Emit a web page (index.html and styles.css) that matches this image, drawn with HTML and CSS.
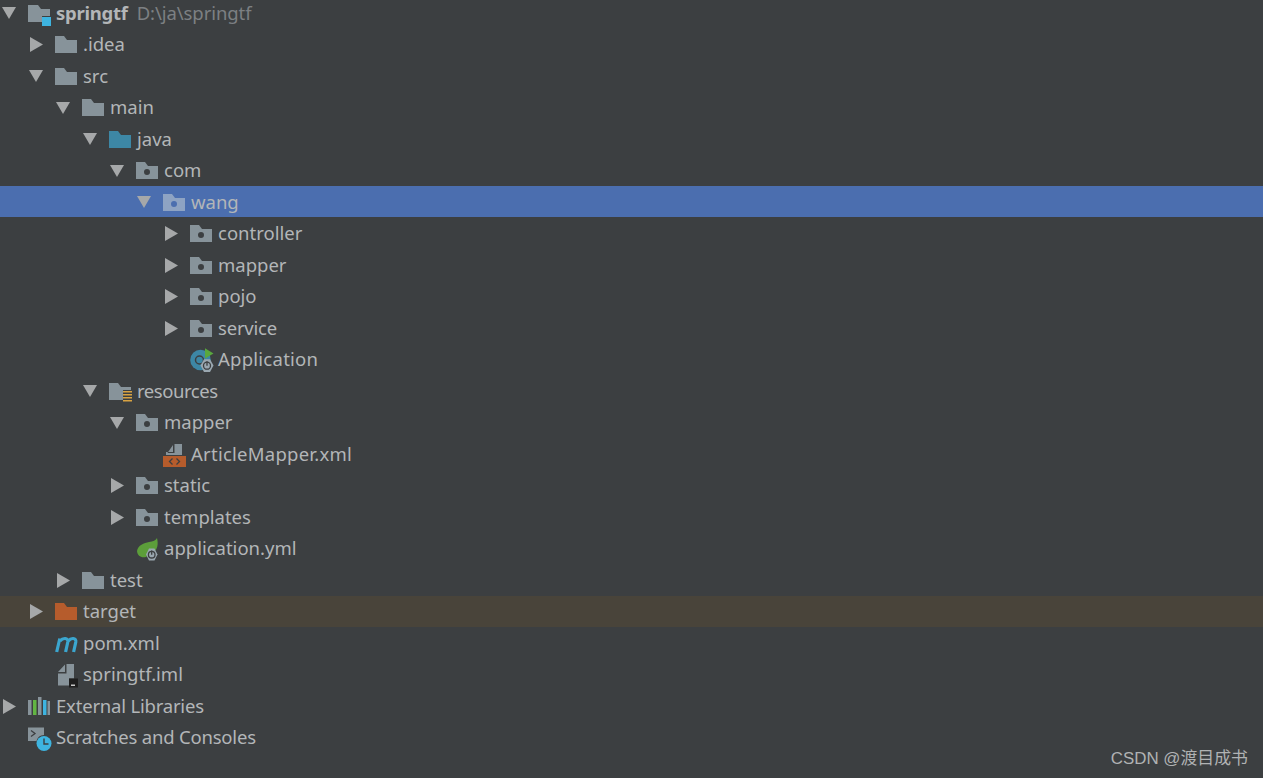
FILE: index.html
```html
<!DOCTYPE html>
<html lang="en">
<head>
<meta charset="utf-8">
<title>springtf</title>
<link rel="stylesheet" href="styles.css">
</head>
<body>
<svg class="defs" width="0" height="0" aria-hidden="true">
  <symbol id="down" viewBox="0 0 14 12"><path d="M0 0H14L7 12Z"/></symbol>
  <symbol id="right" viewBox="0 0 13 15"><path d="M0 0L13 7.5L0 15Z"/></symbol>
  <symbol id="folder" viewBox="0 0 22 17"><path d="M0 0H9L12 4H22V17H0Z"/></symbol>
  <symbol id="pkg" viewBox="0 0 22 17"><path fill-rule="evenodd" d="M0 0H9L12 4H22V17H0ZM11 7A3 3 0 1 0 11 13A3 3 0 1 0 11 7Z"/></symbol>
</svg>
<main class="tree">
  <div class="row l0"><svg class="arrow a-down"><use href="#down"/></svg><svg class="ico" viewBox="0 0 28 28"><path class="grey" d="M0 6H10L13 10H22V17H14V23H0Z"/><rect class="blue" x="14" y="18" width="9" height="9"/></svg><span class="label"><b>springtf</b><span class="path">D:\ja\springtf</span></span></div>
  <div class="row l1"><svg class="arrow a-right"><use href="#right"/></svg><svg class="folder grey"><use href="#folder"/></svg><span class="label">.idea</span></div>
  <div class="row l1"><svg class="arrow a-down"><use href="#down"/></svg><svg class="folder grey"><use href="#folder"/></svg><span class="label">src</span></div>
  <div class="row l2"><svg class="arrow a-down"><use href="#down"/></svg><svg class="folder grey"><use href="#folder"/></svg><span class="label">main</span></div>
  <div class="row l3"><svg class="arrow a-down"><use href="#down"/></svg><svg class="folder teal"><use href="#folder"/></svg><span class="label">java</span></div>
  <div class="row l4"><svg class="arrow a-down"><use href="#down"/></svg><svg class="folder grey"><use href="#pkg"/></svg><span class="label">com</span></div>
  <div class="row l5 selected"><svg class="arrow a-down"><use href="#down"/></svg><svg class="folder pale"><use href="#pkg"/></svg><span class="label">wang</span></div>
  <div class="row l6"><svg class="arrow a-right"><use href="#right"/></svg><svg class="folder grey"><use href="#pkg"/></svg><span class="label">controller</span></div>
  <div class="row l6"><svg class="arrow a-right"><use href="#right"/></svg><svg class="folder grey"><use href="#pkg"/></svg><span class="label">mapper</span></div>
  <div class="row l6"><svg class="arrow a-right"><use href="#right"/></svg><svg class="folder grey"><use href="#pkg"/></svg><span class="label">pojo</span></div>
  <div class="row l6"><svg class="arrow a-right"><use href="#right"/></svg><svg class="folder grey"><use href="#pkg"/></svg><span class="label tight">service</span></div>
  <div class="row l6"><span class="arrow"></span><svg class="ico" viewBox="0 0 28 28"><circle class="teal" cx="10.500" cy="14" r="10.300"/><circle cx="9.500" cy="14" r="4" fill="none" stroke="#3c3f41" stroke-width="1.500"/><path class="green" d="M15 2.300L23.500 7.500L15 12.500Z"/><path class="badge" d="M14 13.300H20L23.500 19.500L20 26H14L10.500 19.500Z"/><circle cx="17" cy="19.700" r="3.500" fill="none" stroke="#3c3f41" stroke-width="1.300"/><path d="M17 15.300V19.700" stroke="#3c3f41" stroke-width="1.300"/></svg><span class="label wide">Application</span></div>
  <div class="row l3"><svg class="arrow a-down"><use href="#down"/></svg><svg class="ico" viewBox="0 0 28 28"><path class="grey" d="M0 6H9L12 10H22V13H14V23H0Z"/><path class="amber" d="M14 14H23V15.500H14ZM14 17H23V18.500H14ZM14 20H23V21.500H14ZM14 23H23V24.500H14Z"/></svg><span class="label narrow">resources</span></div>
  <div class="row l4"><svg class="arrow a-down"><use href="#down"/></svg><svg class="folder grey"><use href="#pkg"/></svg><span class="label">mapper</span></div>
  <div class="row l5"><span class="arrow"></span><svg class="ico" viewBox="0 0 28 28"><path class="grey" d="M3 15V12H10V5ZM11.500 4H19V15H3V13H11.500Z"/><rect class="rust" y="16" width="23" height="11"/><path d="M9.500 18.500L6.500 21.500L9.500 24.500M13.500 18.500L16.500 21.500L13.500 24.500" fill="none" stroke="#3c3f41" stroke-width="1.300"/></svg><span class="label wide">ArticleMapper.xml</span></div>
  <div class="row l4"><svg class="arrow a-right"><use href="#right"/></svg><svg class="folder grey"><use href="#pkg"/></svg><span class="label">static</span></div>
  <div class="row l4"><svg class="arrow a-right"><use href="#right"/></svg><svg class="folder grey"><use href="#pkg"/></svg><span class="label">templates</span></div>
  <div class="row l4"><span class="arrow"></span><svg class="ico" viewBox="0 0 28 28"><path class="leaf" d="M1 16C2 10 8 8 13 7C17 6.500 20 5.500 21 3C22.500 9 21.500 14 18 17L10 22C5 23 1.500 21 1 16Z"/><path class="badge" d="M13 13.500H18.500L21.500 19.500L18.500 25.500H13L10 19.500Z"/><circle cx="15.700" cy="19.700" r="3.300" fill="none" stroke="#3c3f41" stroke-width="1.300"/><path d="M15.700 15.500V19.700" stroke="#3c3f41" stroke-width="1.300"/></svg><span class="label">application.yml</span></div>
  <div class="row l2"><svg class="arrow a-right"><use href="#right"/></svg><svg class="folder grey"><use href="#folder"/></svg><span class="label">test</span></div>
  <div class="row l1 excluded"><svg class="arrow a-right"><use href="#right"/></svg><svg class="folder rust"><use href="#folder"/></svg><span class="label">target</span></div>
  <div class="row l1"><span class="arrow"></span><svg class="ico" viewBox="0 0 28 28"><path class="mvn" d="M1.700 23L4.800 9.500M5 12C8 8.500 13.500 8.500 12.800 13L10.600 23M13.300 12C16 8.500 21.500 8.500 20.800 13L18.600 23"/></svg><span class="label">pom.xml</span></div>
  <div class="row l1"><span class="arrow"></span><svg class="ico" viewBox="0 0 28 28"><path class="grey" d="M3 11L10 3.500V11ZM11.500 3H19V17.500H14V24.500H3V12.500H11.500Z"/><rect x="14" y="17.500" width="9" height="9" fill="#1e1e1e"/><rect x="16" y="23.500" width="4" height="1.500" fill="#c8c8c8"/></svg><span class="label">springtf.iml</span></div>
  <div class="row l0"><svg class="arrow a-right"><use href="#right"/></svg><svg class="ico" viewBox="0 0 28 28"><rect class="grey" x="0" y="8" width="3.500" height="15"/><rect class="lime" x="5" y="8" width="3.500" height="15"/><rect class="grey" x="10" y="5" width="3.500" height="18"/><rect class="blue" x="15" y="8" width="3.500" height="15"/><rect class="grey" x="19.500" y="9" width="2.500" height="14"/></svg><span class="label tight">External Libraries</span></div>
  <div class="row l0"><span class="arrow"></span><svg class="ico" viewBox="0 0 28 28"><path class="grey" d="M0 3.500H16V11A8 8 0 0 0 8.500 17H0Z"/><path d="M3 6.500L7 9.500L3 12.500" fill="none" stroke="#3c3f41" stroke-width="1.300"/><circle class="blue" cx="16" cy="19.500" r="7.500"/><path d="M16 14.500V20H20.500" fill="none" stroke="#3c3f41" stroke-width="1.400"/></svg><span class="label tight">Scratches and Consoles</span></div>
</main>
<div class="watermark">CSDN @渡目成书</div>
</body>
</html>
```
FILE: styles.css
```css
html, body {
  margin: 0;
  height: 100%;
  overflow: hidden;
  background: #3c3f41;
}
body {
  position: relative;
  font-family: "Noto Sans", "Open Sans", sans-serif;
  font-size: 18.500px;
  color: #b3b6b8;
}
.defs { position: absolute; }
.tree { margin-top: -2.55px; }
.row {
  display: flex;
  align-items: center;
  height: 31.5px;
  white-space: nowrap;
}
.l0 { padding-left: 0; }
.l1 { padding-left: 27px; }
.l2 { padding-left: 54px; }
.l3 { padding-left: 81px; }
.l4 { padding-left: 108px; }
.l5 { padding-left: 135px; }
.l6 { padding-left: 162px; }
.selected {
  background: linear-gradient(#4b6eaf, #4b6eaf) no-repeat 0 0 / 100% 31px;
}
.excluded { background: #49443a; }
.arrow {
  flex: none;
  width: 14px;
  height: 12px;
  margin: 0 12px 0 2px;
  fill: #a6a8a9;
}
.a-right {
  width: 13px;
  height: 15px;
  margin: 0 12px 0 3px;
}
.folder {
  flex: none;
  width: 22px;
  height: 17px;
  margin-right: 6px;
}
.ico {
  flex: none;
  width: 28px;
  height: 28px;
}
.label { line-height: 1; }
.label b { font-weight: 700; letter-spacing: -0.25px; }
.tight { letter-spacing: -0.2px; }
.narrow { letter-spacing: -0.45px; }
.wide { letter-spacing: 0.25px; }
.path { margin-left: 9px; color: #7c8083; letter-spacing: -0.08px; }
.grey { fill: #87939a; }
.teal { fill: #3d87a5; }
.pale { fill: #8ea3c3; }
.rust { fill: #b65c2c; }
.blue { fill: #3eb4e0; }
.green { fill: #59a83e; }
.leaf { fill: #5c9e3a; }
.lime { fill: #62b543; }
.badge { fill: #9aa7b0; }
.amber { fill: #d9a343; }
.mvn { fill: none; stroke: #3ba6cf; stroke-width: 3.200; }
.watermark {
  position: absolute;
  right: 15px;
  bottom: 9px;
  font-family: "Liberation Sans", "Noto Sans CJK SC", sans-serif;
  font-size: 16.900px;
  line-height: 20px;
  color: #b0b2b3;
}
```
